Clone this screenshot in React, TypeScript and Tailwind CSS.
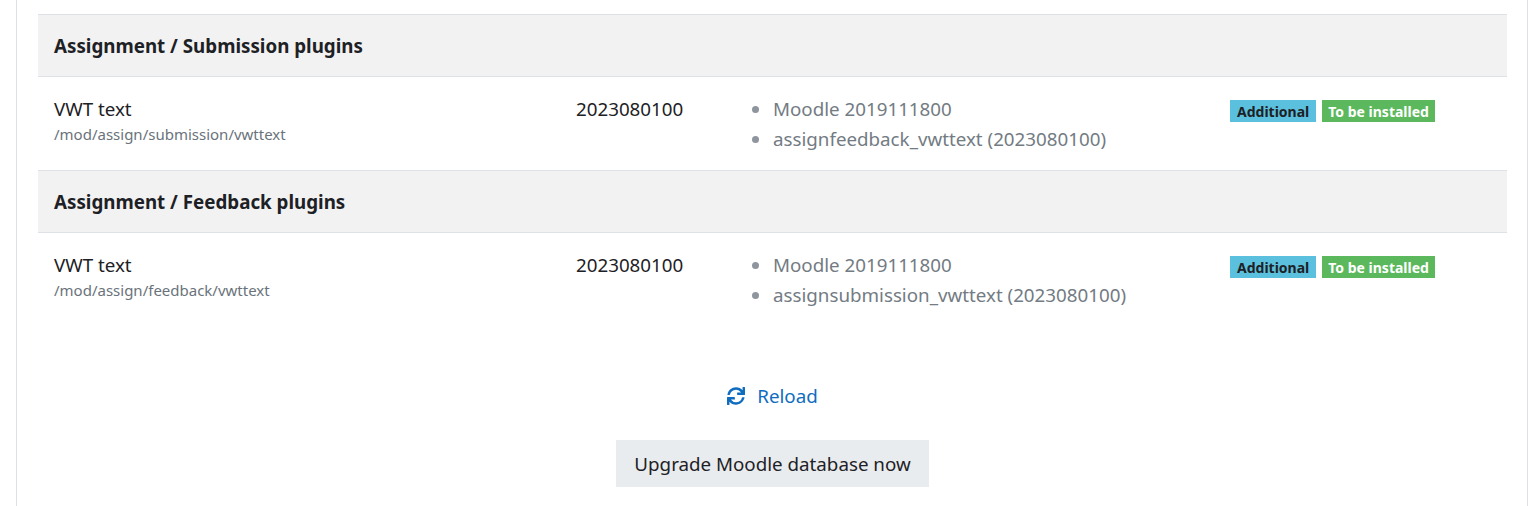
import React from "react";
import { FaSync } from "react-icons/fa";

const F = { fontFamily: '"Noto Sans", "Open Sans", Arial, sans-serif' };

function Header({ title }: { title: string }) {
  return (
    <div className="h-[63px] flex items-center bg-[#f2f2f2] border-t border-b border-[#dee2e6] pl-4 pt-[2px]">
      <span className="font-bold text-[18.75px] text-[#1d2125]">{title}</span>
    </div>
  );
}

function Row({ path, dep }: { path: string; dep: string }) {
  return (
    <div className="grid grid-cols-[522px_174px_480px_293px] h-[93px]">
      <div className="pl-4 pt-[20px]">
        <div className="text-[18.75px] leading-[24px] text-[#1d2125]">VWT text</div>
        <div className="text-[15px] leading-[22px] text-[#6a737b] mt-[2px]">{path}</div>
      </div>
      <div className="pl-4 pt-[20px] text-[18.75px] leading-[24px] text-[#1d2125]">2023080100</div>
      <div className="pl-[18px] pt-[20px] text-[18.75px] text-[#737b83]">
        <div className="flex items-center h-[24px]">
          <span className="w-[7px] h-[7px] rounded-full bg-[#8f959e] mr-[14px]" />
          <span>Moodle 2019111800</span>
        </div>
        <div className="flex items-center h-[24px] mt-[6px]">
          <span className="w-[7px] h-[7px] rounded-full bg-[#8f959e] mr-[14px]" />
          <span>{dep}</span>
        </div>
      </div>
      <div className="pl-4 pt-[23px] flex items-start gap-[6px]">
        <span className="h-[22px] px-[7px] flex items-center bg-[#5bc0de] text-[#1d2125] text-[14px] font-bold">Additional</span>
        <span className="h-[22px] px-[6px] flex items-center bg-[#5cb85c] text-white text-[14px] font-bold">To be installed</span>
      </div>
    </div>
  );
}

export default function App() {
  return (
    <div className="w-[1536px] h-[506px] bg-white overflow-hidden" style={F}>
      <div className="ml-4 mr-2 h-full border-l border-r border-[#dee2e6] pl-[21px] pr-[20px] pt-[14px]">
        <Header title="Assignment / Submission plugins" />
        <Row path="/mod/assign/submission/vwttext" dep="assignfeedback_vwttext (2023080100)" />
        <Header title="Assignment / Feedback plugins" />
        <Row path="/mod/assign/feedback/vwttext" dep="assignsubmission_vwttext (2023080100)" />
        <div className="flex flex-col items-center pt-[56px]">
          <div className="flex items-center gap-[12px] text-[#0f6cbf] text-[18.75px]">
            <FaSync className="w-[18px] h-[18px] text-[#0f6cbf]" />
            <span>Reload</span>
          </div>
          <button className="mt-[30px] h-[47px] px-[18px] bg-[#e9ecef] text-[#1d2125] text-[18.75px]">
            Upgrade Moodle database now
          </button>
        </div>
      </div>
    </div>
  );
}
